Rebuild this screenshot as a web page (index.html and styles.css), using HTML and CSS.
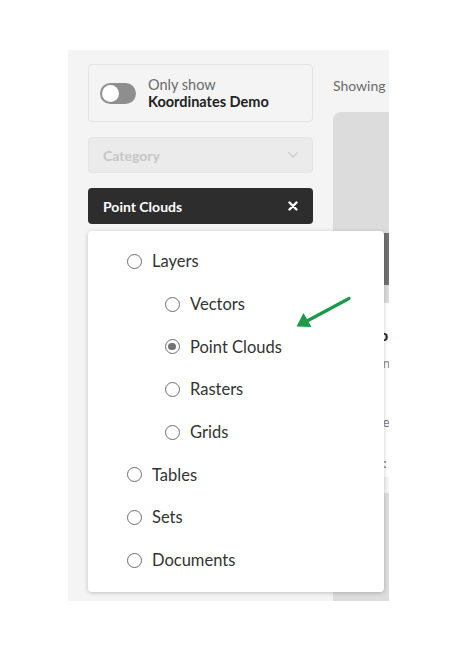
FILE: index.html
```
<!DOCTYPE html>
<html lang="en">
<head>
<meta charset="utf-8">
<title>Filters</title>
<link rel="stylesheet" href="styles.css">
</head>
<body>
<div class="page">
  <div class="panel">
    <aside class="sidebar">
      <div class="toggle-card">
        <span class="switch"><span class="knob"></span></span>
        <div class="toggle-text">
          <span class="muted">Only show</span>
          <span class="strong">Koordinates Demo</span>
        </div>
      </div>
      <div class="select">
        <span>Category</span>
        <svg class="chevron" width="12" height="8" viewBox="0 0 12 8"><path d="M1.5 1.5 L6 6 L10.5 1.5" fill="none" stroke="#cfcfcf" stroke-width="1.5" stroke-linecap="round" stroke-linejoin="round"/></svg>
      </div>
      <div class="chip">
        <span>Point Clouds</span>
        <svg class="close" width="10" height="10" viewBox="0 0 10 10"><path d="M1.5 1.5 L8.5 8.5 M8.5 1.5 L1.5 8.5" stroke="#fff" stroke-width="2.4" stroke-linecap="round"/></svg>
      </div>
      <div class="menu">
        <label class="option"><span class="radio"></span>Layers</label>
        <label class="option sub"><span class="radio"></span>Vectors</label>
        <label class="option sub"><span class="radio checked"></span>Point Clouds</label>
        <label class="option sub"><span class="radio"></span>Rasters</label>
        <label class="option sub"><span class="radio"></span>Grids</label>
        <label class="option"><span class="radio"></span>Tables</label>
        <label class="option"><span class="radio"></span>Sets</label>
        <label class="option"><span class="radio"></span>Documents</label>
      </div>
    </aside>
    <main class="results">
      <div class="showing">Showing</div>
      <div class="card">
        <div class="thumb"></div>
        <div class="card-body">
          <div class="card-title">Demo LiDAR</div>
          <div class="card-meta">Koordinates, Point cloud</div>
          <div class="card-info">Updated daily</div>
          <div class="card-info">Points: 123</div>
        </div>
      </div>
      <div class="card">
        <div class="thumb plain"></div>
      </div>
    </main>
  </div>
  <svg class="arrow" width="474" height="657" viewBox="0 0 474 657">
    <line x1="349" y1="298.5" x2="308" y2="320.5" stroke="#1c9a4a" stroke-width="3.2" stroke-linecap="round"/>
    <polygon points="296.5,326.5 303.5,313 311.5,327" fill="#1c9a4a"/>
  </svg>
</div>
</body>
</html>
```
FILE: styles.css
```
html, body {
  margin: 0;
  padding: 0;
  background: #ffffff;
}

body {
  font-family: Lato, "Open Sans", sans-serif;
  color: #333333;
}

.page {
  position: relative;
  width: 474px;
  height: 657px;
  padding: 50px 0 0 68px;
  box-sizing: border-box;
}

.panel {
  display: flex;
  gap: 20px;
  width: 321px;
  height: 551px;
  padding: 14px 0 0 20px;
  box-sizing: border-box;
  background: #f4f4f4;
  overflow: hidden;
}

.sidebar {
  position: relative;
  flex: none;
  width: 225px;
  align-self: flex-start;
  display: flex;
  flex-direction: column;
  gap: 15px;
}

.toggle-card {
  display: flex;
  align-items: center;
  gap: 12px;
  height: 58px;
  padding: 0 11px;
  box-sizing: border-box;
  border: 1px solid #e3e3e3;
  border-radius: 4px;
  background: #f4f4f4;
}

.switch {
  position: relative;
  flex: none;
  width: 36px;
  height: 21px;
  border-radius: 11px;
  background: #8e8e8e;
}

.knob {
  position: absolute;
  left: 2px;
  top: 2px;
  width: 17px;
  height: 17px;
  border-radius: 50%;
  background: #ffffff;
}

.toggle-text {
  display: flex;
  flex-direction: column;
  font-size: 14.5px;
  line-height: 17px;
}

.muted {
  color: #6b6b6b;
}

.strong {
  color: #222222;
  font-weight: 700;
}

.select {
  display: flex;
  align-items: center;
  justify-content: space-between;
  height: 36px;
  padding: 0 13px 0 14px;
  box-sizing: border-box;
  background: #ebebeb;
  border: 1px solid #e4e4e4;
  border-radius: 4px;
  font-size: 14px;
  font-weight: 700;
  color: #c6c6c6;
}

.chip {
  display: flex;
  align-items: center;
  justify-content: space-between;
  height: 36px;
  padding: 0 15px;
  box-sizing: border-box;
  background: #2d2d2d;
  border-radius: 4px;
  font-size: 14px;
  font-weight: 700;
  color: #ffffff;
}

.menu {
  position: absolute;
  top: 100%;
  left: 0;
  margin-top: 7px;
  width: 296px;
  padding: 9px 0 10px;
  box-sizing: border-box;
  background: #ffffff;
  border-radius: 4px;
  box-shadow: 0 1px 4px rgba(0, 0, 0, 0.22);
  display: flex;
  flex-direction: column;
  z-index: 2;
}

.option {
  display: flex;
  align-items: center;
  gap: 10px;
  height: 42.7px;
  padding-left: 39px;
  font-size: 16.5px;
  color: #333333;
}

.option.sub {
  padding-left: 77px;
}

.radio {
  position: relative;
  flex: none;
  width: 15px;
  height: 15px;
  box-sizing: border-box;
  border: 1.4px solid #6e6e6e;
  border-radius: 50%;
  background: #ffffff;
}

.radio.checked::after {
  content: "";
  position: absolute;
  left: 2.3px;
  top: 2.3px;
  width: 7.6px;
  height: 7.6px;
  border-radius: 50%;
  background: #737373;
}

.results {
  flex: none;
  width: 260px;
  display: flex;
  flex-direction: column;
}

.showing {
  margin-top: 14px;
  font-size: 14px;
  line-height: 16px;
  color: #6b6b6b;
  white-space: nowrap;
}

.card {
  margin-top: 18px;
  border-radius: 8px 8px 0 0;
  background: #ffffff;
  overflow: hidden;
}

.card + .card {
  margin-top: 16px;
  height: 110px;
}

.thumb {
  height: 191px;
  background: linear-gradient(#dcdcdc 0, #dcdcdc 121px, #717171 121px, #717171 173px, #dcdcdc 173px);
}

.thumb.plain {
  height: 110px;
  background: #dddddd;
}

.card-body {
  height: 179px;
  padding: 22px 12px 0;
  box-sizing: border-box;
  white-space: nowrap;
}

.card-title {
  font-size: 16px;
  font-weight: 700;
  color: #222222;
  line-height: 20px;
}

.card-meta {
  margin-top: 10px;
  font-size: 13px;
  line-height: 16px;
  color: #888888;
}

.card-info {
  margin-top: 42px;
  font-size: 14px;
  line-height: 17px;
  color: #777777;
}

.card-info + .card-info {
  margin-top: 24px;
}

.arrow {
  position: absolute;
  left: 0;
  top: 0;
  pointer-events: none;
  z-index: 3;
}
```
